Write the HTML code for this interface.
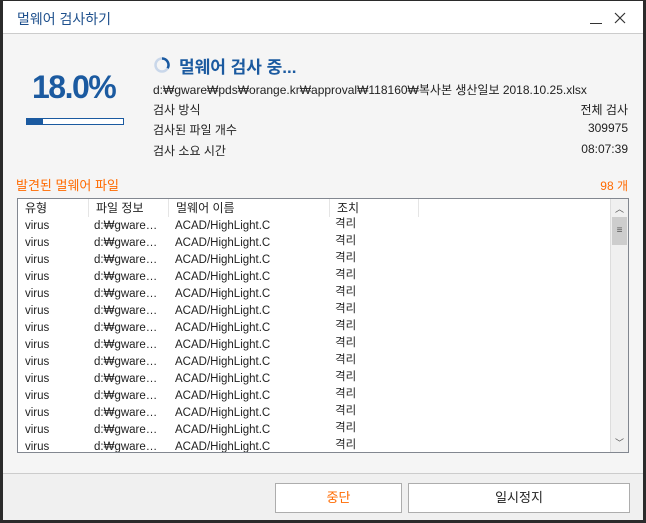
<!DOCTYPE html>
<html><head><meta charset="utf-8"><style>
*{margin:0;padding:0;box-sizing:border-box}
body{width:646px;height:523px;background:#2b2b2b;font-family:"Liberation Sans","Noto Sans CJK KR",sans-serif;position:relative;overflow:hidden;font-size:12px;color:#222}
.win{position:absolute;left:3px;top:1px;width:640px;height:519px;background:#f5f5f5}
.title{position:absolute;left:0;top:0;width:640px;height:33px;background:#fff;border-bottom:1px solid #ccc}
.abs{position:absolute;white-space:nowrap}
.list{position:absolute;left:14px;top:197px;width:612px;height:255px;background:#fff;border:1px solid #828790;overflow:hidden}
.hdr{position:absolute;top:0;height:18px;font-size:12px;line-height:18px;border-right:1px solid #e5e5e5;padding-left:7px;white-space:nowrap}
.row{position:absolute;left:0;height:17px;font-size:11.5px;line-height:17px;white-space:nowrap}
.row span{position:absolute;white-space:nowrap}
.footer{position:absolute;left:0;top:472px;width:640px;height:47px;background:#f0f0f0;border-top:1px solid #ccc}
.btn{position:absolute;top:9px;height:30px;background:#fff;border:1px solid #adadad;text-align:center;line-height:28px;font-size:13px}
</style></head><body>
<div class="win">
<div class="title"><div class="abs" style="left:14px;top:8px;font-size:14px;color:#1d4f8c">멀웨어 검사하기</div>
<div class="abs" style="left:587px;top:22px;width:12px;height:1px;background:#333"></div>
<svg class="abs" style="left:611px;top:11px" width="12" height="12" viewBox="0 0 12 12"><path d="M1 1L11 11M11 1L1 11" stroke="#333" stroke-width="1.2"/></svg></div>
<div class="abs" style="left:29px;top:68px;font-size:32px;font-weight:bold;color:#1b5aa0;letter-spacing:-1.5px">18.0%</div>
<div class="abs" style="left:23px;top:117px;width:98px;height:7px;border:1px solid #1b5aa0;background:#fff"><div style="width:16px;height:5px;background:#1b5aa0"></div></div>
<svg class="abs" style="left:150px;top:55px" width="18" height="18" viewBox="0 0 18 18"><circle cx="9" cy="9" r="6.5" fill="none" stroke="#c9d7ea" stroke-width="2.5"/><path d="M9 2.5A6.5 6.5 0 0 1 14.6 12.3" fill="none" stroke="#1b5aa0" stroke-width="2.5"/></svg>
<div class="abs" style="left:176px;top:52px;font-size:17px;color:#1b5aa0;font-weight:bold">멀웨어 검사 중...</div>
<div class="abs" style="left:150px;top:80px;font-size:12px">d:₩gware₩pds₩orange.kr₩approval₩118160₩복사본 생산일보 2018.10.25.xlsx</div>
<div class="abs" style="left:150px;top:100px">검사 방식</div><div class="abs" style="right:15px;top:100px">전체 검사</div>
<div class="abs" style="left:150px;top:120px">검사된 파일 개수</div><div class="abs" style="right:15px;top:120px">309975</div>
<div class="abs" style="left:150px;top:141px">검사 소요 시간</div><div class="abs" style="right:15px;top:141px">08:07:39</div>
<div class="abs" style="left:13px;top:174px;color:#ff6a00;font-size:13px">발견된 멀웨어 파일</div>
<div class="abs" style="right:15px;top:176px;color:#ff6a00;font-size:12px">98 개</div>
<div class="list">
<div class="hdr" style="left:0;width:71px">유형</div>
<div class="hdr" style="left:71px;width:80px">파일 정보</div>
<div class="hdr" style="left:151px;width:161px">멀웨어 이름</div>
<div class="hdr" style="left:312px;width:89px">조치</div>
<div class="abs" style="left:592px;top:0;width:18px;height:253px;background:#f0f0f0;border-left:1px solid #ddd">
<div style="position:absolute;top:3px;left:4px;font-size:9px;color:#555">︿</div>
<div style="position:absolute;top:18px;left:1px;width:15px;height:28px;background:#cdcdcd;text-align:center;font-size:10px;line-height:28px;color:#555">≡</div>
<div style="position:absolute;bottom:3px;left:4px;font-size:9px;color:#555">﹀</div></div>
<div id="rows"></div>
</div>
<div class="footer">
<div class="btn" style="left:272px;width:127px;color:#ff6a00">중단</div>
<div class="btn" style="left:405px;width:222px">일시정지</div>
</div>
</div>
<script>
var h='';for(var i=0;i<14;i++){h+='<div class="row" style="top:'+(19+i*17)+'px"><span style="left:7px">virus</span><span style="left:76px">d:₩gware…</span><span style="left:157px">ACAD/HighLight.C</span><span style="left:317px;top:-2px">격리</span></div>'}
document.getElementById('rows').innerHTML=h;
</script>
</body></html>
